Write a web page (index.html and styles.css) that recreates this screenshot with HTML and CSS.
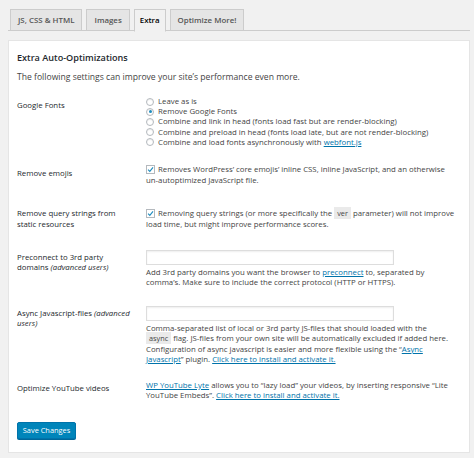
FILE: index.html
```html
<!DOCTYPE html>
<html>
<head>
<meta charset="utf-8">
<link rel="stylesheet" href="styles.css">
</head>
<body>
<div class="wrap">
  <nav class="tabs">
    <span class="tab">JS, CSS &amp; HTML</span>
    <span class="tab">Images</span>
    <span class="tab active">Extra</span>
    <span class="tab">Optimize More!</span>
  </nav>
  <div class="panel">
    <h2 class="title">Extra Auto-Optimizations</h2>
    <p class="intro">The following settings can improve your site’s performance even more.</p>
    <div class="rows">
      <div class="row">
        <div class="label">Google Fonts</div>
        <div class="field">
          <div class="opt"><span class="radio"></span>Leave as is</div>
          <div class="opt"><span class="radio checked"></span>Remove Google Fonts</div>
          <div class="opt"><span class="radio"></span>Combine and link in head (fonts load fast but are render-blocking)</div>
          <div class="opt"><span class="radio"></span>Combine and preload in head (fonts load late, but are not render-blocking)</div>
          <div class="opt"><span class="radio"></span>Combine and load fonts asynchronously with <a href="#">webfont.js</a></div>
        </div>
      </div>
      <div class="row row-emoji">
        <div class="label">Remove emojis</div>
        <div class="field"><span class="check"><svg viewBox="0 0 10 10" width="7" height="7"><path d="M1.5 5.2 L4 7.6 L8.6 2" fill="none" stroke="#1e8cbe" stroke-width="1.6"/></svg></span>Removes WordPress’ core emojis’ inline CSS, inline JavaScript, and an otherwise<br>un-autoptimized JavaScript file.</div>
      </div>
      <div class="row row-query">
        <div class="label label-flush">Remove query strings from<br>static resources</div>
        <div class="field"><span class="check"><svg viewBox="0 0 10 10" width="7" height="7"><path d="M1.5 5.2 L4 7.6 L8.6 2" fill="none" stroke="#1e8cbe" stroke-width="1.6"/></svg></span>Removing query strings (or more specifically the <code>ver</code> parameter) will not improve<br>load time, but might improve performance scores.</div>
      </div>
      <div class="row row-preconnect">
        <div class="label">Preconnect to 3rd party<br>domains <em>(advanced users)</em></div>
        <div class="field">
          <div class="input"></div>
          <div class="desc">Add 3rd party domains you want the browser to <a href="#">preconnect</a> to, separated by<br>comma’s. Make sure to include the correct protocol (HTTP or HTTPS).</div>
        </div>
      </div>
      <div class="row row-async">
        <div class="label">Async Javascript-files <em>(advanced<br>users)</em></div>
        <div class="field">
          <div class="input"></div>
          <div class="desc">Comma-separated list of local or 3rd party JS-files that should loaded with the<br><code>async</code> flag. JS-files from your own site will be automatically excluded if added here.<br>Configuration of async javascript is easier and more flexible using the “<a href="#">Async<br>Javascript</a>” plugin. <a href="#">Click here to install and activate it.</a></div>
        </div>
      </div>
      <div class="row row-youtube">
        <div class="label">Optimize YouTube videos</div>
        <div class="field"><a href="#">WP YouTube Lyte</a> allows you to “lazy load” your videos, by inserting responsive “Lite<br>YouTube Embeds”. <a href="#">Click here to install and activate it.</a></div>
      </div>
    </div>
    <div class="submit"><button class="btn">Save Changes</button></div>
  </div>
</div>
</body>
</html>
```
FILE: styles.css
```css
html, body {
  margin: 0;
  background: #f1f1f1;
}
body {
  font-family: "Open Sans", "Noto Sans", sans-serif;
  color: #444;
  font-size: 7.8px;
  line-height: 10.2px;
}
.wrap {
  padding: 9px 4px 0 8px;
}
.tabs {
  display: flex;
  gap: 4px;
  padding-left: 2px;
  height: 22px;
  border-bottom: 1px solid #ccc;
  box-sizing: border-box;
}
.tab {
  display: block;
  height: 22px;
  box-sizing: border-box;
  padding: 0 7px;
  border: 1px solid #ccc;
  background: #e5e5e5;
  color: #555;
  font-weight: 600;
  font-size: 7.9px;
  line-height: 20px;
}
.tab.active {
  background: #f1f1f1;
  color: #000;
  border-bottom-color: #f1f1f1;
  height: 23px;
  padding: 0 5px;
}
.panel {
  margin-top: 9px;
  width: 462px;
  height: 413px;
  box-sizing: border-box;
  background: #fff;
  border: 1px solid #e5e5e5;
  padding: 0 10px 0 8px;
}
.title {
  margin: 10px 0 0;
  font-size: 9.1px;
  line-height: 13px;
  font-weight: 600;
  color: #23282d;
}
.intro {
  margin: 7px 0 0;
  font-size: 8.6px;
  line-height: 12px;
  color: #444;
}
.rows {
  margin-top: 13px;
}
.row {
  display: grid;
  grid-template-columns: 129px 1fr;
}
.row-emoji { margin-top: 17.5px; }
.row-query { margin-top: 23.5px; }
.row-preconnect { margin-top: 20px; }
.row-async { margin-top: 17px; }
.row-youtube { margin-top: 16px; }
.label {
  padding-top: 3.5px;
  color: #23282d;
}
.label-flush {
  padding-top: 0;
}
.label em {
  font-style: italic;
}
.field {
  white-space: nowrap;
}
.opt {
  display: block;
  height: 10.2px;
}
.radio {
  display: inline-block;
  position: relative;
  width: 8px;
  height: 8px;
  box-sizing: border-box;
  border: 1px solid #b4b9be;
  border-radius: 50%;
  background: #fff;
  box-shadow: inset 0 1px 1px rgba(0,0,0,.08);
  margin-right: 4px;
  vertical-align: -1.5px;
}
.radio.checked::after {
  content: "";
  position: absolute;
  left: 1.5px;
  top: 1.5px;
  width: 3px;
  height: 3px;
  border-radius: 50%;
  background: #1e8cbe;
}
.check {
  display: inline-block;
  width: 9px;
  height: 9px;
  box-sizing: border-box;
  border: 1px solid #b4b9be;
  background: #fff;
  vertical-align: -1.5px;
  margin-right: 3px;
  position: relative;
}
.check svg {
  position: absolute;
  left: 0;
  top: 0;
}
code {
  font-family: "Open Sans", sans-serif;
  font-size: 7.3px;
  line-height: 1;
  background: #eaeaea;
  padding: 1px 3px;
}
a {
  color: #0073aa;
}
.input {
  width: 248px;
  height: 15px;
  box-sizing: border-box;
  border: 1px solid #ddd;
  box-shadow: inset 0 1px 2px rgba(0,0,0,.07);
  background: #fff;
  margin-top: 1.5px;
}
.desc {
  margin-top: 2px;
}
.submit {
  margin-top: 21.5px;
}
.btn {
  display: block;
  width: 59px;
  height: 17px;
  padding: 0;
  border: 1px solid #0073aa;
  border-radius: 2px;
  background: #0085ba;
  color: #fff;
  font-family: "Open Sans", sans-serif;
  font-size: 7.4px;
  box-shadow: 0 1px 0 #006799;
}
```
